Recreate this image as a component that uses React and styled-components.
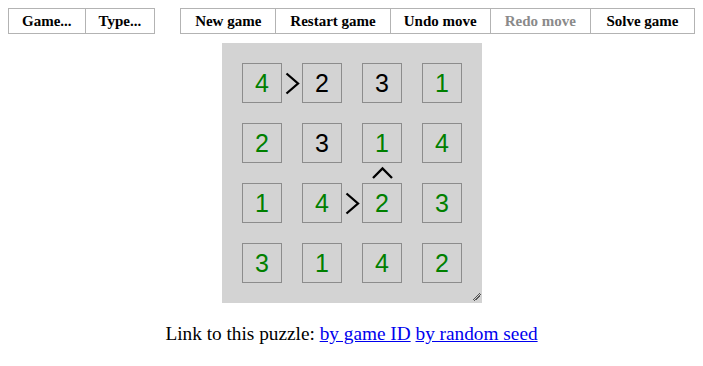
import React from "react";
import styled, { createGlobalStyle } from "styled-components";

const GlobalStyle = createGlobalStyle`
    body {
        margin: 8px;
        background: #fff;
        font-family: "Liberation Serif", "Times New Roman", serif;
    }
`;

const Page = styled.div`
    display: flex;
    flex-direction: column;
    align-items: center;
`;
const Toolbar = styled.div`
    display: flex;
    justify-content: space-between;
    width: 100%;
`;
const ButtonGroup = styled.div`
    display: flex;
`;
const ToolButton = styled.div`
    height: 24px;
    line-height: 24px;
    padding: 0 ${(props) => props.$pad || 13}px;
    border: 1px solid #b3b3b3;
    margin-left: -1px;
    font-weight: 700;
    font-size: 15px;
    color: ${(props) => (props.$disabled ? "#8a8a8a" : "#000")};
    white-space: nowrap;
    &:first-child {
        margin-left: 0;
    }
`;
const BoardWrap = styled.div`
    margin-top: 9px;
    width: 260px;
    height: 260px;
    background: #d3d3d3;
`;
const LinkLine = styled.div`
    margin-top: 20px;
    font-size: 19.3px;
    a {
        color: #0000ee;
        text-decoration: underline;
    }
`;

const grid = [
    [{ v: 4, g: 1 }, { v: 2 }, { v: 3 }, { v: 1, g: 1 }],
    [{ v: 2, g: 1 }, { v: 3 }, { v: 1, g: 1 }, { v: 4, g: 1 }],
    [{ v: 1, g: 1 }, { v: 4, g: 1 }, { v: 2, g: 1 }, { v: 3, g: 1 }],
    [{ v: 3, g: 1 }, { v: 1, g: 1 }, { v: 4, g: 1 }, { v: 2, g: 1 }],
];

function Board() {
    const cell = (r, c) => ({ x: 20.5 + c * 60, y: 20.5 + r * 60 });
    return (
        <svg width="260" height="260" viewBox="0 0 260 260">
            {grid.map((row, r) =>
                row.map((item, c) => {
                    const p = cell(r, c);
                    return (
                        <g key={r + "-" + c}>
                            <rect
                                x={p.x}
                                y={p.y}
                                width="39"
                                height="39"
                                fill="#d3d3d3"
                                stroke="#8c8c8c"
                                strokeWidth="1"
                            />
                            <text
                                x={p.x + 19.5}
                                y={p.y + 28.5}
                                textAnchor="middle"
                                fontFamily="'Liberation Sans', Arial, sans-serif"
                                fontSize="25"
                                fill={item.g ? "#008000" : "#000"}
                            >
                                {item.v}
                            </text>
                        </g>
                    );
                })
            )}
            <g fill="none" stroke="#000" strokeWidth="2.3">
                <polyline points="64.5,30.5 76,40.5 64.5,50.5" />
                <polyline points="124.5,150.5 136,160.5 124.5,170.5" />
                <polyline points="151,135 160.5,125.5 170,135" />
            </g>
            <g stroke="#555" strokeWidth="1">
                <line x1="251" y1="257" x2="258" y2="250" />
                <line x1="254" y1="257" x2="258" y2="253" />
                <line x1="252" y1="258" x2="259" y2="251" />
            </g>
        </svg>
    );
}

export default function App() {
    return (
        <Page>
            <GlobalStyle />
            <Toolbar>
                <ButtonGroup>
                    <ToolButton $pad={13}>Game...</ToolButton>
                    <ToolButton $pad={13}>Type...</ToolButton>
                </ButtonGroup>
                <ButtonGroup>
                    <ToolButton $pad={14}>New game</ToolButton>
                    <ToolButton $pad={14}>Restart game</ToolButton>
                    <ToolButton $pad={13}>Undo move</ToolButton>
                    <ToolButton $pad={14} $disabled>
                        Redo move
                    </ToolButton>
                    <ToolButton $pad={15.5}>Solve game</ToolButton>
                </ButtonGroup>
            </Toolbar>
            <BoardWrap>
                <Board />
            </BoardWrap>
            <LinkLine>
                Link to this puzzle: <a href="#">by game ID</a>{" "}
                <a href="#">by random seed</a>
            </LinkLine>
        </Page>
    );
}
